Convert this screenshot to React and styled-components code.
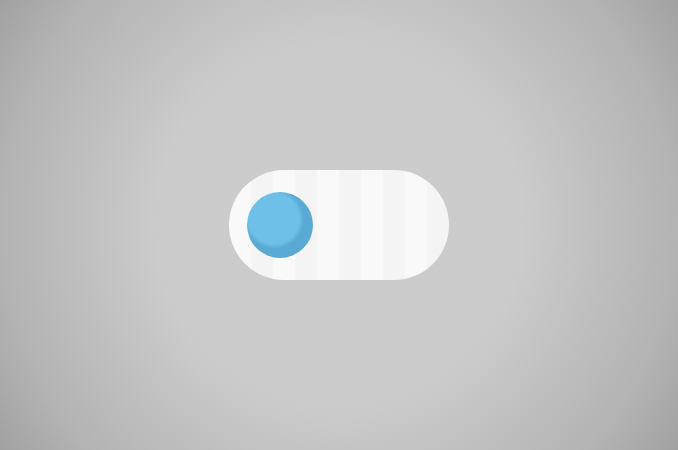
import { createGlobalStyle, styled } from 'styled-components'

const GlobalStyle = createGlobalStyle`
  html, body {
    margin: 0;
    padding: 0;
    height: 100%;
  }
  body {
    font-family: 'Liberation Sans', Arial, sans-serif;
  }
  #root {
    height: 100%;
  }
`

const Stage = styled.div`
  height: 100vh;
  display: flex;
  align-items: center;
  justify-content: center;
  background: radial-gradient(
    circle at center,
    #cccccc 0%,
    #cbcbcb 45%,
    #b3b3b3 83%,
    #a1a1a1 100%
  );
`

const Track = styled.button`
  width: 220px;
  height: 110px;
  border: 0;
  padding: 0 0 0 18px;
  border-radius: 55px;
  display: flex;
  align-items: center;
  justify-content: ${(props) => (props.$on ? 'flex-end' : 'flex-start')};
  cursor: pointer;
  background: repeating-linear-gradient(
    90deg,
    #f9f9f9 0 22px,
    #f4f4f4 22px 44px
  );
`

// the lit part sits up-left, the shade wraps round the lower right
const Knob = styled.span`
  width: 66px;
  height: 66px;
  border-radius: 50%;
  background: radial-gradient(circle at 27px 27px, #6ec0e8 0 25px, #58a9d3 30px);
`

const App = () => {
  return (
    <>
      <GlobalStyle />
      <Stage>
        <Track type="button" aria-label="toggle">
          <Knob />
        </Track>
      </Stage>
    </>
  )
}

export default App
